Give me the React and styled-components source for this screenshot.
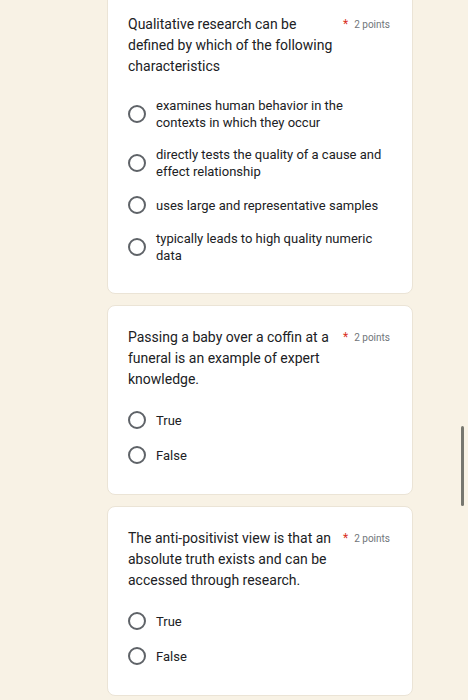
import React from 'react'
import styled, { createGlobalStyle } from 'styled-components'

const questions = [
    {
        id: 1,
        text: 'Qualitative research can be defined by which of the following characteristics',
        options: [
            'examines human behavior in the contexts in which they occur',
            'directly tests the quality of a cause and effect relationship',
            'uses large and representative samples',
            'typically leads to high quality numeric data',
        ],
    },
    {
        id: 2,
        text: 'Passing a baby over a coffin at a funeral is an example of expert knowledge.',
        options: ['True', 'False'],
    },
    {
        id: 3,
        text: 'The anti-positivist view is that an absolute truth exists and can be accessed through research.',
        options: ['True', 'False'],
    },
]

const App = () => {
    return (
        <>
            <GlobalStyle />
            <Page>
                <Column>
                    {questions.map(q => (
                        <Card key={q.id}>
                            <Header>
                                <Question>{q.text}</Question>
                                <Points>
                                    <Star>*</Star>2 points
                                </Points>
                            </Header>
                            <Options>
                                {q.options.map(opt => (
                                    <Option key={opt}>
                                        <Radio />
                                        <OptionText>{opt}</OptionText>
                                    </Option>
                                ))}
                            </Options>
                        </Card>
                    ))}
                </Column>
                <Scrollbar />
            </Page>
        </>
    )
}

export default App

// ================================= styling =================================

const GlobalStyle = createGlobalStyle`
    html, body {
        margin: 0;
        padding: 0;
        background: #f8f2e5;
    }
    body {
        font-family: Roboto, "Liberation Sans", sans-serif;
        color: #202124;
        overflow: hidden;
    }
`

const Page = styled.div`
    position: relative;
    width: 468px;
    height: 700px;
    overflow: hidden;
    background: #f8f2e5;
`

const Column = styled.div`
    display: flex;
    flex-direction: column;
    gap: 11px;
    width: 306px;
    margin: -8px 0 0 107px;
`

const Card = styled.div`
    background: #ffffff;
    border: 1px solid #ebe4d6;
    border-radius: 8px;
    padding: 21px 22px 29px 20px;
`

// question text on the left, points on the right
const Header = styled.div`
    display: flex;
    align-items: flex-start;
    gap: 6px;
`

const Question = styled.div`
    flex: 1;
    font-size: 14px;
    line-height: 21px;
    color: #202124;
`

const Points = styled.div`
    flex-shrink: 0;
    font-size: 10px;
    line-height: 21px;
    color: #70757a;
    white-space: nowrap;
`

const Star = styled.span`
    color: #d93025;
    font-size: 12px;
    margin-right: 6px;
`

const Options = styled.div`
    display: flex;
    flex-direction: column;
    gap: 15px;
    margin-top: 20px;
`

const Option = styled.div`
    display: flex;
    align-items: center;
    gap: 10px;
    min-height: 20px;
`

const Radio = styled.span`
    flex-shrink: 0;
    box-sizing: border-box;
    width: 18px;
    height: 18px;
    border: 2px solid #5f6368;
    border-radius: 50%;
`

const OptionText = styled.span`
    font-size: 13px;
    line-height: 17px;
    color: #202124;
`

// overlay scroll indicator on the right edge
const Scrollbar = styled.div`
    position: absolute;
    right: 4px;
    top: 426px;
    width: 3px;
    height: 80px;
    border-radius: 2px;
    background: #77776f;
`
